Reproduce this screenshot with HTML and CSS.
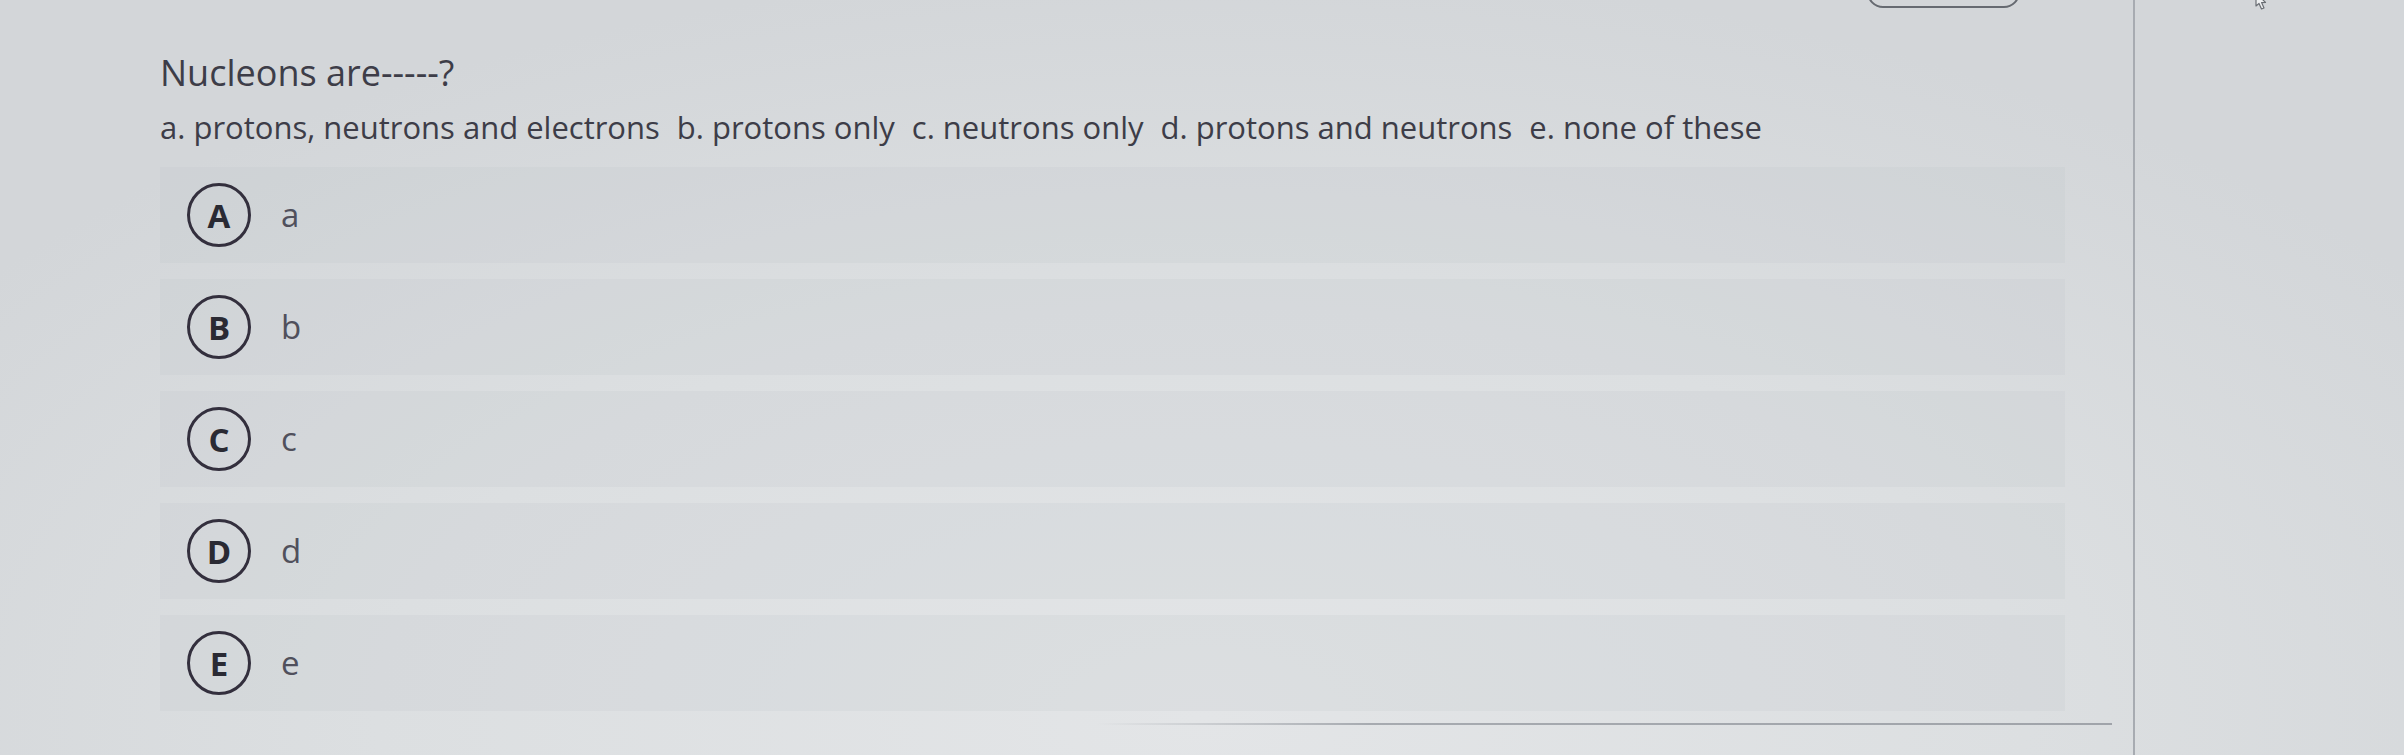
FILE: index.html
```html
<!DOCTYPE html>
<html lang="en">
<head>
<meta charset="utf-8">
<title>Nucleons question</title>
<link rel="stylesheet" href="styles.css">
</head>
<body>
<div class="page">
  <main class="main">
    <div class="topbar">
      <button class="tool-btn" type="button" aria-label="Tool"></button>
    </div>
    <section class="question">
      <p class="stem">Nucleons are-----?</p>
      <p class="choices"><span class="ch">a. protons, neutrons and electrons</span><span class="ch">b. protons only</span><span class="ch">c. neutrons only</span><span class="ch">d. protons and neutrons</span><span class="ch">e. none of these</span></p>
    </section>
    <ul class="options">
      <li class="option"><span class="bubble">A</span><span class="label">a</span></li>
      <li class="option"><span class="bubble">B</span><span class="label">b</span></li>
      <li class="option"><span class="bubble">C</span><span class="label">c</span></li>
      <li class="option"><span class="bubble">D</span><span class="label">d</span></li>
      <li class="option"><span class="bubble">E</span><span class="label">e</span></li>
    </ul>
    <div class="rule"></div>
  </main>
  <aside class="side">
    <svg class="cursor" width="18" height="14" viewBox="0 0 18 14" aria-hidden="true">
      <path d="M2 0 L2 9 L5 6.5 L7.5 12 L10 11 L7.6 5.6 L11.5 5.4 L6 0" fill="#eef0f1" stroke="#6a6e74" stroke-width="1.2" stroke-linejoin="round"/>
    </svg>
  </aside>
</div>
</body>
</html>
```
FILE: styles.css
```css
html, body {
  margin: 0;
  padding: 0;
}

body {
  width: 2404px;
  height: 755px;
  overflow: hidden;
  font-family: "Open Sans", "Noto Sans", sans-serif;
  color: #3b3b46;
  background: radial-gradient(ellipse 1500px 750px at 50% 95%, #e3e5e7 0%, #dcdfe1 55%, #d3d6d9 100%);
}

.page {
  display: flex;
  height: 755px;
}

.main {
  width: 2135px;
  box-sizing: border-box;
  padding-left: 160px;
  border-right: 2px solid #a7abb1;
  display: flex;
  flex-direction: column;
}

.topbar {
  height: 8px;
  overflow: hidden;
  display: flex;
  justify-content: flex-end;
  align-items: flex-end;
  padding-right: 113px;
}

.tool-btn {
  flex: none;
  width: 153px;
  height: 50px;
  border: 2px solid #666a71;
  border-radius: 16px;
  background: transparent;
  padding: 0;
}

.question {
  margin-top: 40px;
}

.stem,
.choices {
  margin: 0;
  color: #3d3d48;
  white-space: nowrap;
}

.stem {
  font-size: 36px;
  line-height: 49px;
}

.choices {
  margin-top: 9px;
  font-size: 31px;
  line-height: 42px;
  display: flex;
  gap: 17px;
}

.options {
  list-style: none;
  margin: 19px 0 0;
  padding: 0;
  width: 1905px;
  display: flex;
  flex-direction: column;
  gap: 16px;
}

.option {
  height: 96px;
  display: flex;
  align-items: center;
  padding-left: 27px;
  background: rgba(190, 195, 200, 0.18);
}

.bubble {
  flex: none;
  width: 58px;
  height: 58px;
  border: 3px solid #332f3d;
  border-radius: 50%;
  display: flex;
  align-items: center;
  justify-content: center;
  font-weight: 700;
  font-size: 33px;
  line-height: 1;
  color: #2a2a33;
}

.label {
  margin-left: 30px;
  font-size: 33px;
  color: #50505c;
  line-height: 1;
  padding-bottom: 2px;
}

.rule {
  margin-top: 12px;
  height: 2px;
  width: 1952px;
  background: linear-gradient(to right, rgba(160, 164, 170, 0) 0%, rgba(160, 164, 170, 0) 48%, rgba(160, 164, 170, 0.9) 62%, #a0a4aa 100%);
}

.side {
  flex: 1;
  position: relative;
}

.cursor {
  position: absolute;
  left: 119px;
  top: -3px;
}
```
